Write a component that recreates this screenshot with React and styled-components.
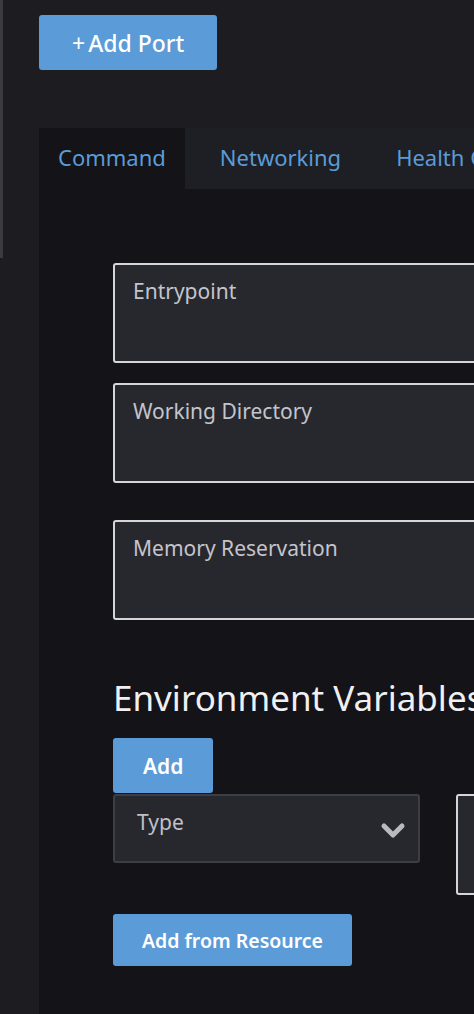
import React, { useState } from "react";
import styled, { createGlobalStyle } from "styled-components";

const GlobalStyle = createGlobalStyle`
    html, body {
        margin: 0;
        padding: 0;
        background-color: #1c1c21;
        font-family: "Noto Sans", "Open Sans", sans-serif;
        overflow: hidden;
    }
`;

const Page = styled.div`
    position: relative;
    min-height: 100vh;
    padding: 15px 0 0 39px;
    box-sizing: border-box;
    width: 100vw;
    overflow: hidden;
`;

const ScrollEdge = styled.div`
    position: absolute;
    left: 0;
    top: 0;
    width: 3px;
    height: 258px;
    background-color: #3a3b40;
`;

const Botao = styled.button`
    display: inline-flex;
    align-items: center;
    justify-content: center;
    height: ${(p) => p.$height || 55}px;
    padding: 0 ${(p) => p.$pad || 28}px;
    background-color: #5b9bd7;
    color: #fff;
    border: none;
    border-radius: 3px;
    font-family: inherit;
    font-size: ${(p) => p.$size || 21}px;
    font-weight: ${(p) => p.$weight || 600};
    cursor: pointer;
`;

const Mais = styled.span`
    margin-right: 3px;
    font-weight: 400;
`;

const Tabs = styled.div`
    display: flex;
    margin-top: 58px;
    width: 700px;
    height: 61px;
    background-color: #1e1f24;
`;

const Tab = styled.div`
    display: flex;
    align-items: center;
    padding: 0 ${(p) => (p.$active ? 19 : 17)}px 3px;
    margin-right: ${(p) => (p.$active ? 18 : 21)}px;
    background-color: ${(p) => (p.$active ? "#131318" : "transparent")};
    color: #5b9bd7;
    font-size: 22px;
    white-space: nowrap;
    cursor: pointer;
`;

const Panel = styled.div`
    width: 700px;
    min-height: 825px;
    background-color: #131318;
    padding: 74px 0 40px 74px;
    box-sizing: border-box;
`;

const Campo = styled.div`
    width: 520px;
    height: 100px;
    box-sizing: border-box;
    margin-bottom: ${(p) => p.$gap || 20}px;
    padding: 12px 18px;
    background-color: #27282e;
    border: 2px solid #d6d6da;
    border-radius: 3px;
    color: #c4c4cc;
    font-size: 21px;
`;

const Titulo = styled.h2`
    margin: 54px 0 16px;
    color: #f0f0f2;
    font-size: 35px;
    font-weight: 400;
    line-height: 48px;
    white-space: nowrap;
`;

const Linha = styled.div`
    display: flex;
    align-items: flex-start;
    gap: 36px;
    margin: 1px 0 19px;
`;

const Select = styled.div`
    display: flex;
    justify-content: space-between;
    width: 307px;
    height: 69px;
    box-sizing: border-box;
    padding: 12px 12px 0 22px;
    background-color: #27282e;
    border: 2px solid #3d3e44;
    border-radius: 3px;
    color: #c0c0c8;
    font-size: 21px;
`;

const Chevron = styled.svg`
    margin-top: 14px;
`;

const CampoLado = styled.div`
    width: 200px;
    height: 101px;
    box-sizing: border-box;
    background-color: #27282e;
    border: 2px solid #d6d6da;
    border-radius: 3px;
`;

export default function App() {
    const [aba, setAba] = useState("Command");
    const abas = ["Command", "Networking", "Health Check"];

    return (
        <Page>
            <GlobalStyle />
            <ScrollEdge />
            <Botao $pad={33} $size={23} $weight={500}>
                <Mais>+</Mais>Add Port
            </Botao>

            <Tabs>
                {abas.map((a) => (
                    <Tab key={a} $active={aba === a} onClick={() => setAba(a)}>
                        {a}
                    </Tab>
                ))}
            </Tabs>

            <Panel>
                <Campo>Entrypoint</Campo>
                <Campo $gap={37}>Working Directory</Campo>
                <Campo>Memory Reservation</Campo>

                <Titulo>Environment Variables</Titulo>
                <Botao $pad={30}>Add</Botao>
                <Linha>
                    <Select>
                        Type
                        <Chevron width="26" height="18" viewBox="0 0 26 18">
                            <polyline
                                points="4,4 13,13 22,4"
                                fill="none"
                                stroke="#b9b9c1"
                                strokeWidth="5"
                                strokeLinecap="round"
                                strokeLinejoin="round"
                            />
                        </Chevron>
                    </Select>
                    <CampoLado />
                </Linha>
                <Botao $height={52} $pad={29} $size={19.5}>Add from Resource</Botao>
            </Panel>
        </Page>
    );
}
